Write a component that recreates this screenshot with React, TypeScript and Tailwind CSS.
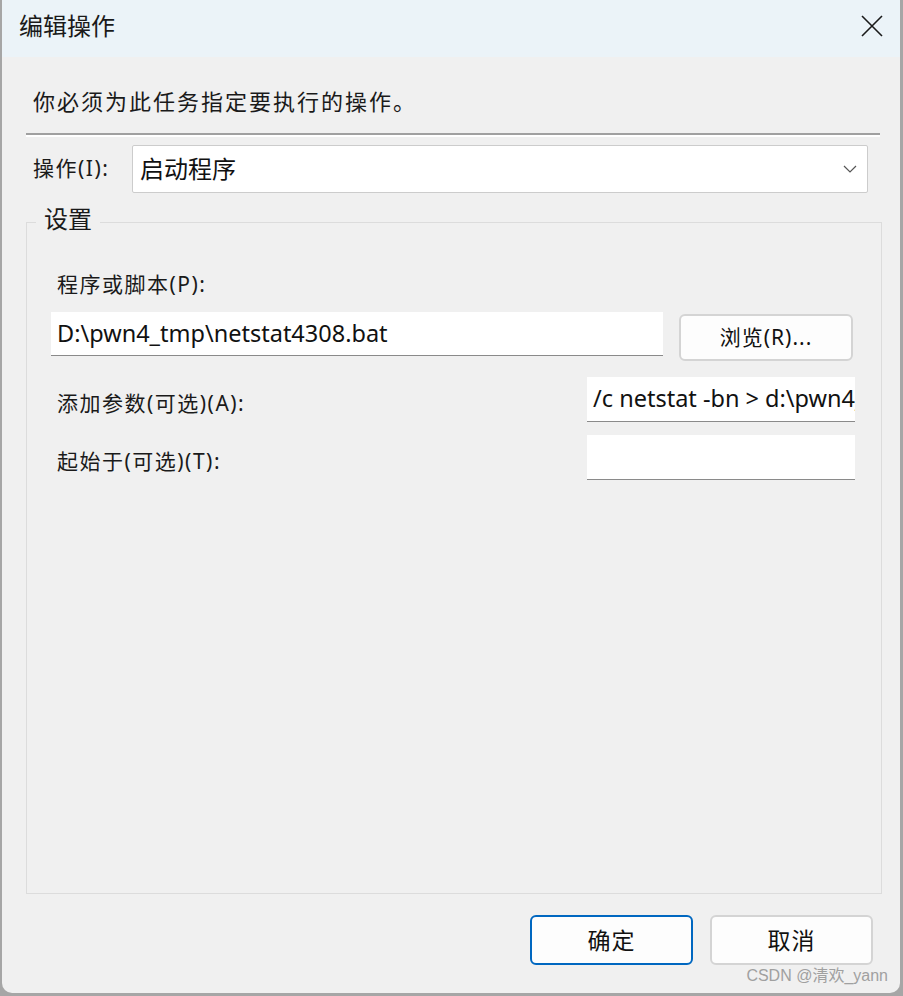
import React from 'react'

const ui = { fontFamily: '"Noto Sans", "Noto Sans CJK SC", sans-serif' }

function Field({ value, className }: { value?: string; className: string }) {
  return (
    <div
      className={`flex items-center overflow-hidden whitespace-nowrap border-b border-[#8a8a8a] bg-white pl-[6px] text-[23.5px] text-[#111] ${className}`}
    >
      {value}
    </div>
  )
}

function DialogButton({ label, primary, className }: { label: string; primary?: boolean; className: string }) {
  return (
    <button
      className={`flex items-center justify-center rounded-[6px] bg-[#fdfdfd] text-[#111] ${
        primary ? 'border-2 border-[#0067c0]' : 'border-2 border-[#d4d4d4]'
      } ${className}`}
    >
      {label}
    </button>
  )
}

export default function App() {
  return (
    <div className="h-[996px] w-[903px] overflow-hidden bg-[#a6a6a6] pl-[2px] pr-[3px] pb-[3px]" style={ui}>
      <div className="flex h-full flex-col overflow-hidden rounded-b-[10px] bg-[#f0f0f0]">
        {/* title bar */}
        <div className="flex h-[57px] shrink-0 items-center justify-between bg-[#ebf3f8] pb-[6px] pl-[17px] pr-[16px]">
          <span className="text-[24px] text-[#1a1a1a]">编辑操作</span>
          <svg width="22" height="22" viewBox="0 0 22 22" className="mr-[1px]">
            <path d="M1 1 L21 21 M21 1 L1 21" stroke="#1a1a1a" strokeWidth="1.6" fill="none" />
          </svg>
        </div>

        <div className="flex flex-1 flex-col pl-[24px] pr-[18px]">
          <p className="mt-[30px] pl-[7px] text-[22px] leading-[28px] tracking-[2px] text-[#1a1a1a]">
            你必须为此任务指定要执行的操作。
          </p>

          <div className="mr-[2px] mt-[18px] h-[2px] bg-[#a0a0a0]" />
          <div className="mr-[2px] h-[2px] bg-white" />

          <div className="mt-[8px] flex items-center">
            <span className="w-[106px] pl-[7px] text-[21px] tracking-[1.5px] text-[#1a1a1a]">操作(I):</span>
            <div className="flex h-[48px] w-[736px] items-center justify-between rounded-[2px] border border-[#cccccc] bg-white pl-[7px] pr-[10px]">
              <span className="text-[24px] text-[#111]">启动程序</span>
              <svg width="14" height="8" viewBox="0 0 14 8">
                <path d="M1 1 L7 7 L13 1" stroke="#555" strokeWidth="1.2" fill="none" />
              </svg>
            </div>
          </div>

          {/* settings group */}
          <div className="relative mt-[29px] h-[672px] border border-[#dcdcdc]">
            <span className="absolute left-[9px] top-[-19px] bg-[#f0f0f0] px-[8px] text-[24px] leading-[30px] text-[#1a1a1a]">
              设置
            </span>
            <div className="flex flex-col pl-[24px] pr-[26px]">
              <span className="mt-[48px] pl-[6px] text-[21px] leading-[26px] tracking-[1.5px] text-[#1a1a1a]">
                程序或脚本(P):
              </span>
              <div className="mt-[15px] flex items-start">
                <Field value="D:\pwn4_tmp\netstat4308.bat" className="h-[44px] w-[612px]" />
                <DialogButton
                  label="浏览(R)..."
                  className="ml-[16px] mt-[2px] h-[47px] w-[174px] text-[21px] tracking-[1px]"
                />
              </div>
              <div className="mt-[16px] flex items-center justify-between">
                <span className="pl-[6px] pt-[9px] text-[21px] tracking-[1.5px] text-[#1a1a1a]">添加参数(可选)(A):</span>
                <Field value="/c netstat -bn > d:\pwn4_tmp\netstat4308.txt" className="h-[45px] w-[268px]" />
              </div>
              <div className="mt-[13px] flex items-center justify-between">
                <span className="pl-[6px] pt-[8px] text-[21px] tracking-[1.5px] text-[#1a1a1a]">起始于(可选)(T):</span>
                <Field className="h-[45px] w-[268px]" />
              </div>
            </div>
          </div>

          <div className="mt-[21px] flex justify-end gap-[17px] pr-[9px]">
            <DialogButton label="确定" primary className="h-[50px] w-[163px] text-[23px] tracking-[1px]" />
            <DialogButton label="取消" className="h-[50px] w-[163px] text-[23px] tracking-[1px]" />
          </div>
          <div className="-mr-[6px] flex justify-end pt-[1px]">
            <span
              className="text-[16px] leading-[20px] text-[#a0a0a0]"
              style={{ fontFamily: '"Liberation Sans", "Noto Sans CJK SC", sans-serif' }}
            >
              CSDN @清欢_yann
            </span>
          </div>
        </div>
      </div>
    </div>
  )
}
